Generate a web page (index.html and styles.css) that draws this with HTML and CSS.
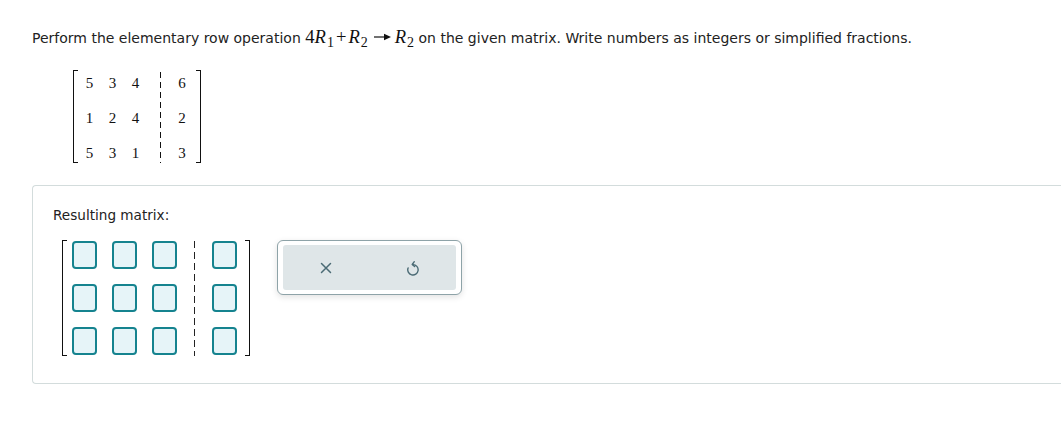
FILE: index.html
```html
<!DOCTYPE html>
<html>
<head>
<meta charset="utf-8">
<link rel="stylesheet" href="styles.css">
</head>
<body>
<div class="page">
  <p class="question">Perform the elementary row operation <span class="math">4<i>R</i><sub>1</sub><span class="op">+</span><i>R</i><sub>2</sub><span class="arrow"><svg width="17" height="8" viewBox="0 0 17 8"><line x1="0" y1="4" x2="12" y2="4" stroke="#111" stroke-width="1.2"/><polygon points="10,0.8 17,4 10,7.2" fill="#111"/></svg></span><i>R</i><sub>2</sub></span> on the given matrix. Write numbers as integers or simplified fractions.</p>

  <div class="given">
    <div class="bracket left"></div>
    <div class="gm">
      <div class="gcell">5</div><div class="gcell">3</div><div class="gcell">4</div><div class="gsep"></div><div class="gcell">6</div>
      <div class="gcell">1</div><div class="gcell">2</div><div class="gcell">4</div><div class="gcell">2</div>
      <div class="gcell">5</div><div class="gcell">3</div><div class="gcell">1</div><div class="gcell">3</div>
    </div>
    <div class="bracket right"></div>
  </div>

  <div class="panel">
    <div class="label">Resulting matrix:</div>
    <div class="answer-row">
      <div class="answer">
        <div class="bracket left big"></div>
        <div class="am">
          <div class="box"></div><div class="box"></div><div class="box"></div><div class="asep"></div><div class="box"></div>
          <div class="box"></div><div class="box"></div><div class="box"></div><div class="box"></div>
          <div class="box"></div><div class="box"></div><div class="box"></div><div class="box"></div>
        </div>
        <div class="bracket right big"></div>
      </div>
      <div class="tools">
        <div class="tools-inner">
          <button class="tool" aria-label="Clear">
            <svg width="12" height="12" viewBox="0 0 12 12"><path d="M1.5 1.5 L10.5 10.5 M10.5 1.5 L1.5 10.5" stroke="#4b6b75" stroke-width="1.5" fill="none" stroke-linecap="round"/></svg>
          </button>
          <button class="tool" aria-label="Undo">
            <svg width="14" height="17" viewBox="0 0 14 17"><path d="M2.1 8.9 A5.2 5.2 0 1 0 7 5.6" stroke="#4b6b75" stroke-width="1.4" fill="none" stroke-linecap="round"/><path d="M8.3 2.7 L6.2 5.5 L8.6 7.5" stroke="#4b6b75" stroke-width="1.4" fill="none" stroke-linecap="round" stroke-linejoin="round"/></svg>
          </button>
        </div>
      </div>
    </div>
  </div>
</div>
</body>
</html>
```

FILE: styles.css
```css
html, body {
  margin: 0;
  padding: 0;
  background: #fff;
}
body {
  font-family: "DejaVu Sans", Verdana, sans-serif;
  color: #222;
}
.page {
  padding: 23px 0 0 32px;
}
.question {
  margin: 0;
  font-size: 14px;
  line-height: 24px;
  white-space: nowrap;
}
.math {
  font-family: "Liberation Serif", "Times New Roman", serif;
  font-size: 18.6px;
  color: #111;
  margin-left: 0;
}
.math i {
  font-style: italic;
}
.math sub {
  font-size: 14px;
  font-style: normal;
  vertical-align: -4px;
  line-height: 0;
  margin-left: 1px;
}
.math .op {
  margin: 0 2px;
}
.math .arrow {
  display: inline-block;
  margin: 0 4px 0 6px;
  vertical-align: 2px;
}
.given {
  display: flex;
  margin: 20px 0 0 41px;
  height: 93px;
}
.bracket {
  width: 4px;
  border: 1px solid #111;
}
.bracket.left {
  border-right: none;
}
.bracket.right {
  border-left: none;
}
.gm {
  display: grid;
  grid-template-columns: 23px 23px 23px 26px 18px;
  grid-template-rows: repeat(3, 23px);
  row-gap: 12px;
  padding: 2px 5px 0 0;
  font-family: "Liberation Serif", "Times New Roman", serif;
  font-size: 15px;
  color: #111;
}
.gcell {
  display: flex;
  align-items: center;
  justify-content: center;
}
.gsep {
  grid-column: 4;
  grid-row: 1 / span 3;
  justify-self: center;
  width: 1px;
  margin: 0 0 2px;
  background: repeating-linear-gradient(to bottom, #111 0 6px, transparent 6px 10px);
}
.panel {
  margin-top: 22px;
  border: 1px solid #d3dcdc;
  border-right: none;
  border-radius: 4px 0 0 4px;
  height: 199px;
  box-sizing: border-box;
  padding: 21px 0 0 20px;
}
.label {
  font-size: 13.6px;
  line-height: 16px;
}
.answer-row {
  display: flex;
  align-items: flex-start;
  margin-top: 17px;
  margin-left: 9px;
}
.answer {
  display: flex;
  height: 116px;
}
.bracket.big {
  height: 114px;
}
.am {
  display: grid;
  grid-template-columns: 25px 25px 25px 5px 25px;
  grid-template-rows: repeat(3, 28px);
  column-gap: 15px;
  row-gap: 15px;
  padding: 1px 8px 0 5px;
}
.box {
  box-sizing: border-box;
  width: 25px;
  height: 28px;
  border: 2px solid #15838f;
  border-radius: 4px;
  background: #e6f4f8;
}
.asep {
  grid-column: 4;
  grid-row: 1 / span 3;
  justify-self: center;
  width: 1.5px;
  margin: 0 0 -1px;
  background: repeating-linear-gradient(to bottom, #222 0 7px, transparent 7px 11px);
}
.tools {
  margin-left: 27px;
  margin-top: 0;
  border: 1px solid #8ea3a8;
  border-radius: 6px;
  padding: 4px 5px;
  background: #fff;
  box-shadow: 0 2px 6px rgba(0,0,0,0.12);
}
.tools-inner {
  display: flex;
  width: 173px;
  height: 45px;
  background: #dfe6e8;
  border-radius: 3px;
}
.tool {
  flex: 1;
  border: none;
  background: transparent;
  display: flex;
  align-items: center;
  justify-content: center;
  padding: 0;
}
```
